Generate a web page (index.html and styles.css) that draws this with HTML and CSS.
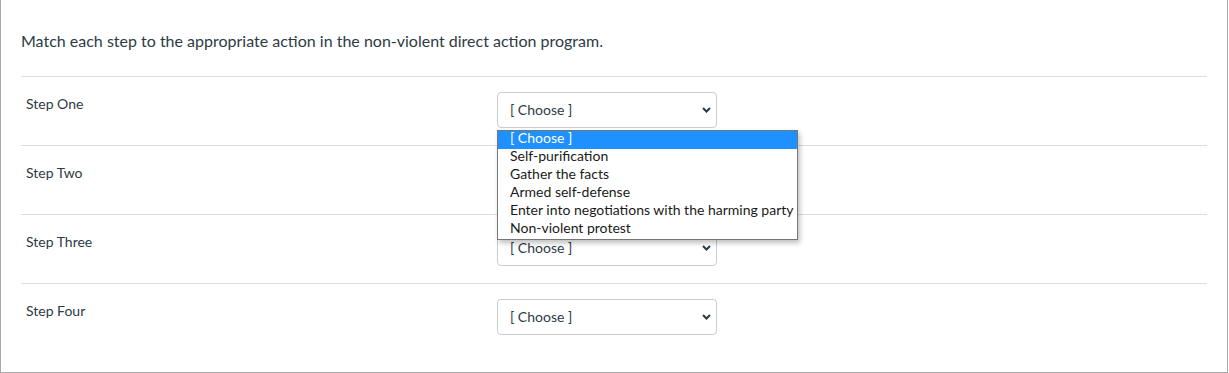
FILE: index.html
```html
<!DOCTYPE html>
<html lang="en">
<head>
    <meta charset="UTF-8">
    <title>Matching Question</title>
    <link rel="stylesheet" href="styles.css">
</head>
<body>
    <div class="question">
        <div class="question-text">Match each step to the appropriate action in the non-violent direct action program.</div>

        <div class="match-row">
            <div class="match-label">Step One</div>
            <div class="match-answer">
                <div class="choose">
                    <span>[ Choose ]</span>
                    <svg class="chevron" width="9" height="6" viewBox="0 0 9 6"><path d="M1 1 L4.5 4.5 L8 1" fill="none" stroke="#2d3b45" stroke-width="2"/></svg>
                </div>
                <ul class="option-list">
                    <li class="selected">[ Choose ]</li>
                    <li>Self-purification</li>
                    <li>Gather the facts</li>
                    <li>Armed self-defense</li>
                    <li>Enter into negotiations with the harming party</li>
                    <li>Non-violent protest</li>
                </ul>
            </div>
        </div>

        <div class="match-row">
            <div class="match-label">Step Two</div>
            <div class="match-answer">
                <!-- hidden under the open list -->
                <div class="choose covered">
                    <span>[ Choose ]</span>
                    <svg class="chevron" width="9" height="6" viewBox="0 0 9 6"><path d="M1 1 L4.5 4.5 L8 1" fill="none" stroke="#2d3b45" stroke-width="2"/></svg>
                </div>
            </div>
        </div>

        <div class="match-row">
            <div class="match-label">Step Three</div>
            <div class="match-answer">
                <div class="choose">
                    <span>[ Choose ]</span>
                    <svg class="chevron" width="9" height="6" viewBox="0 0 9 6"><path d="M1 1 L4.5 4.5 L8 1" fill="none" stroke="#2d3b45" stroke-width="2"/></svg>
                </div>
            </div>
        </div>

        <div class="match-row">
            <div class="match-label">Step Four</div>
            <div class="match-answer">
                <div class="choose">
                    <span>[ Choose ]</span>
                    <svg class="chevron" width="9" height="6" viewBox="0 0 9 6"><path d="M1 1 L4.5 4.5 L8 1" fill="none" stroke="#2d3b45" stroke-width="2"/></svg>
                </div>
            </div>
        </div>
    </div>
</body>
</html>
```

FILE: styles.css
```css
/* General styles */
body {
    margin: 0;
    padding: 0;
    background: #fff;
    font-family: Lato, "Open Sans", sans-serif;
    color: #2d3b45;
    overflow: hidden;
}

/* Question box */
.question {
    box-sizing: border-box;
    width: 1228px;
    height: 373px;
    padding: 0 20px;
    border: 1px solid #aaa;
    border-top: none;
}

.question-text {
    font-size: 16px;
    line-height: 20px;
    padding: 31px 0 25px;
}

/* Rows */
.match-row {
    display: grid;
    grid-template-columns: 476px 1fr;
    border-top: 1px solid #ddd;
    padding: 15px 0 17px;
}

.match-label {
    font-size: 14px;
    line-height: 20px;
    padding: 2px 0 0 5px;
}

.match-answer {
    position: relative;
}

/* Select box */
.choose {
    box-sizing: border-box;
    width: 220px;
    height: 36px;
    display: flex;
    align-items: center;
    justify-content: space-between;
    padding: 0 5px 2px 12px;
    border: 1px solid #c7cdd1;
    border-radius: 4px;
    background: #fff;
    font-size: 14px;
}

.choose.covered span {
    visibility: hidden;
}

.chevron {
    margin-top: 2px;
}

/* Open dropdown list */
.option-list {
    position: absolute;
    top: 38px;
    left: 0;
    z-index: 10;
    box-sizing: border-box;
    width: 301px;
    margin: 0;
    padding: 0;
    list-style: none;
    background: #fff;
    border: 1px solid #767676;
    box-shadow: 2px 3px 5px rgba(0, 0, 0, 0.25);
    font-size: 14px;
    color: #1a1a1a;
}

.option-list li {
    height: 18px;
    line-height: 14px;
    padding-left: 12px;
    white-space: nowrap;
}

.option-list li.selected {
    background: #1e90ff;
    color: #fff;
}
```
